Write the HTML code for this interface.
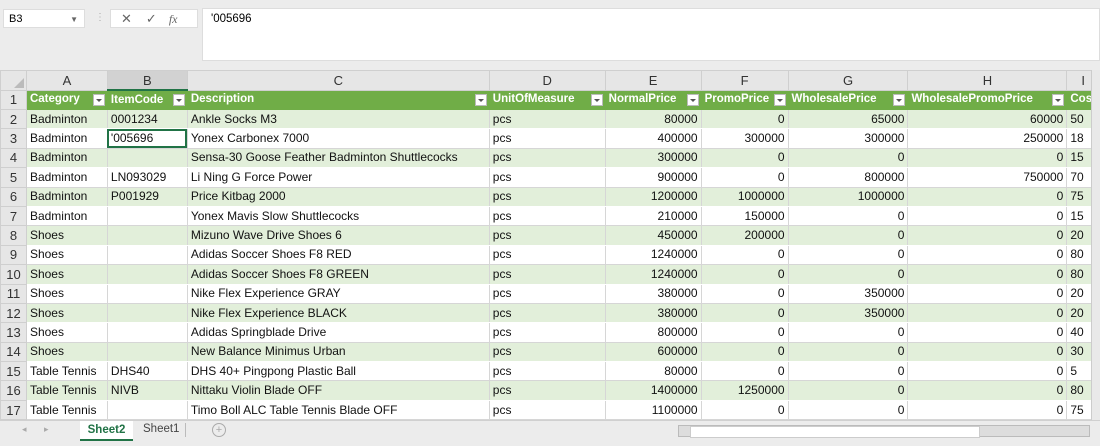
<!DOCTYPE html><html><head><style>
body{margin:0;width:1100px;height:445px;overflow:hidden;background:#ececec;font-family:"Liberation Sans",Arial,sans-serif;position:relative}
.a{position:absolute}
table{border-collapse:collapse;table-layout:fixed;position:absolute;left:0;top:70px;font-size:12px}
tr{height:19.4px}
td{height:18px;padding:0 3px;border:1px solid #d6d6d6;white-space:nowrap;overflow:hidden;color:#111;line-height:17px}
tr.h td{background:#e6e6e6;text-align:center;color:#333;border-color:#cfcfcf;font-size:13px}
td.n{background:#e6e6e6;text-align:center;color:#333;border-color:#cfcfcf;padding:0;font-size:13px}
tr.t td:not(.n){background:#70ad47;color:#fff;font-weight:bold;border-color:#70ad47;position:relative;font-size:11.5px}
tr.g td:not(.n){background:#e2efda;border-color:#fff #d6d6d6}
.r{text-align:right}
.dd{position:absolute;right:2px;top:3px;width:12px;height:12px;background:#fff;border:1px solid #bbb;box-sizing:border-box}
.dd:after{content:"";position:absolute;left:2px;top:4px;border:3px solid transparent;border-top:3px solid #555}
</style></head><body>
<div class="a" style="left:3px;top:9px;width:82px;height:19px;background:#fff;border:1px solid #ddd;font-size:11px;line-height:19px;padding-left:5px;box-sizing:border-box">B3<span style="position:absolute;right:6px;font-size:8px;color:#666">▼</span></div>
<div class="a" style="left:95px;top:12px;color:#aaa;font-size:10px">⋮</div>
<div class="a" style="left:110px;top:9px;width:88px;height:19px;background:#fff;border:1px solid #ddd;box-sizing:border-box;font-size:13px;color:#666;line-height:18px"><span style="margin-left:10px">✕</span><span style="margin-left:14px">✓</span><span style="margin-left:12px;font-style:italic;font-family:'Liberation Serif';font-size:12px">fx</span></div>
<div class="a" style="left:202px;top:8px;width:898px;height:53px;background:#fff;border:1px solid #ddd;box-sizing:border-box;font-size:11.5px;padding:4px 8px">'005696</div>
<div class="a" style="left:0;top:70px;width:1100px;height:350px;background:#fff"></div>
<table>
<colgroup><col style="width:26px"><col style="width:81px"><col style="width:80px"><col style="width:302px"><col style="width:116px"><col style="width:96px"><col style="width:87px"><col style="width:120px"><col style="width:159px"><col style="width:30px"></colgroup>
<tr class="h"><td class="n" style="position:relative"><span style="position:absolute;right:2px;bottom:2px;border:5px solid transparent;border-right-color:#bbb;border-bottom-color:#bbb"></span></td><td>A</td><td style="background:#d2d2d2;border-bottom:2px solid #217346">B</td><td>C</td><td>D</td><td>E</td><td>F</td><td>G</td><td>H</td><td>I</td></tr>
<tr class="t"><td class="n">1</td><td>Category<i class="dd"></i></td><td>ItemCode<i class="dd"></i></td><td>Description<i class="dd"></i></td><td>UnitOfMeasure<i class="dd"></i></td><td>NormalPrice<i class="dd"></i></td><td>PromoPrice<i class="dd"></i></td><td>WholesalePrice<i class="dd"></i></td><td>WholesalePromoPrice<i class="dd"></i></td><td>Cost</td></tr>
<tr class="g"><td class="n">2</td><td>Badminton</td><td>0001234</td><td>Ankle Socks M3</td><td>pcs</td><td class="r">80000</td><td class="r">0</td><td class="r">65000</td><td class="r">60000</td><td>50</td></tr>
<tr><td class="n">3</td><td>Badminton</td><td style="outline:2px solid #217346;outline-offset:-2px">'005696</td><td>Yonex Carbonex 7000</td><td>pcs</td><td class="r">400000</td><td class="r">300000</td><td class="r">300000</td><td class="r">250000</td><td>18</td></tr>
<tr class="g"><td class="n">4</td><td>Badminton</td><td></td><td>Sensa-30 Goose Feather Badminton Shuttlecocks</td><td>pcs</td><td class="r">300000</td><td class="r">0</td><td class="r">0</td><td class="r">0</td><td>15</td></tr>
<tr><td class="n">5</td><td>Badminton</td><td>LN093029</td><td>Li Ning G Force Power</td><td>pcs</td><td class="r">900000</td><td class="r">0</td><td class="r">800000</td><td class="r">750000</td><td>70</td></tr>
<tr class="g"><td class="n">6</td><td>Badminton</td><td>P001929</td><td>Price Kitbag 2000</td><td>pcs</td><td class="r">1200000</td><td class="r">1000000</td><td class="r">1000000</td><td class="r">0</td><td>75</td></tr>
<tr><td class="n">7</td><td>Badminton</td><td></td><td>Yonex Mavis Slow Shuttlecocks</td><td>pcs</td><td class="r">210000</td><td class="r">150000</td><td class="r">0</td><td class="r">0</td><td>15</td></tr>
<tr class="g"><td class="n">8</td><td>Shoes</td><td></td><td>Mizuno Wave Drive Shoes 6</td><td>pcs</td><td class="r">450000</td><td class="r">200000</td><td class="r">0</td><td class="r">0</td><td>20</td></tr>
<tr><td class="n">9</td><td>Shoes</td><td></td><td>Adidas Soccer Shoes F8 RED</td><td>pcs</td><td class="r">1240000</td><td class="r">0</td><td class="r">0</td><td class="r">0</td><td>80</td></tr>
<tr class="g"><td class="n">10</td><td>Shoes</td><td></td><td>Adidas Soccer Shoes F8 GREEN</td><td>pcs</td><td class="r">1240000</td><td class="r">0</td><td class="r">0</td><td class="r">0</td><td>80</td></tr>
<tr><td class="n">11</td><td>Shoes</td><td></td><td>Nike Flex Experience GRAY</td><td>pcs</td><td class="r">380000</td><td class="r">0</td><td class="r">350000</td><td class="r">0</td><td>20</td></tr>
<tr class="g"><td class="n">12</td><td>Shoes</td><td></td><td>Nike Flex Experience BLACK</td><td>pcs</td><td class="r">380000</td><td class="r">0</td><td class="r">350000</td><td class="r">0</td><td>20</td></tr>
<tr><td class="n">13</td><td>Shoes</td><td></td><td>Adidas Springblade Drive</td><td>pcs</td><td class="r">800000</td><td class="r">0</td><td class="r">0</td><td class="r">0</td><td>40</td></tr>
<tr class="g"><td class="n">14</td><td>Shoes</td><td></td><td>New Balance Minimus Urban</td><td>pcs</td><td class="r">600000</td><td class="r">0</td><td class="r">0</td><td class="r">0</td><td>30</td></tr>
<tr><td class="n">15</td><td>Table Tennis</td><td>DHS40</td><td>DHS 40+ Pingpong Plastic Ball</td><td>pcs</td><td class="r">80000</td><td class="r">0</td><td class="r">0</td><td class="r">0</td><td>5</td></tr>
<tr class="g"><td class="n">16</td><td>Table Tennis</td><td>NIVB</td><td>Nittaku Violin Blade OFF</td><td>pcs</td><td class="r">1400000</td><td class="r">1250000</td><td class="r">0</td><td class="r">0</td><td>80</td></tr>
<tr><td class="n">17</td><td>Table Tennis</td><td></td><td>Timo Boll ALC Table Tennis Blade OFF</td><td>pcs</td><td class="r">1100000</td><td class="r">0</td><td class="r">0</td><td class="r">0</td><td>75</td></tr>
</table>
<div class="a" style="left:1091px;top:70px;width:9px;height:350px;background:#e9e9e9;border-left:1px solid #ccc"></div>
<div class="a" style="left:0;top:420px;width:1100px;height:25px;background:#ececec;border-top:1px solid #d0d0d0;font-size:11.5px">
<span class="a" style="left:22px;top:3px;color:#aaa;font-size:9px">◂&nbsp;&nbsp;&nbsp;&nbsp;&nbsp;&nbsp;&nbsp;▸</span>
<div class="a" style="left:80px;top:0;width:53px;height:18px;background:#fff;color:#217346;font-weight:bold;text-align:center;line-height:18px;border-bottom:2px solid #217346">Sheet2</div>
<div class="a" style="left:143px;top:2px;color:#444">Sheet1</div>
<div class="a" style="left:185px;top:2px;width:1px;height:14px;background:#bbb"></div>
<div class="a" style="left:212px;top:2px;width:12px;height:12px;border:1px solid #aaa;border-radius:50%;color:#aaa;font-size:11px;line-height:12px;text-align:center">+</div>
<div class="a" style="left:678px;top:4px;width:412px;height:12px;background:#ddd;border:1px solid #bbb;box-sizing:border-box"></div>
<div class="a" style="left:690px;top:5px;width:288px;height:10px;background:#fff;border:1px solid #ccc"></div>
</div>
</body></html>
